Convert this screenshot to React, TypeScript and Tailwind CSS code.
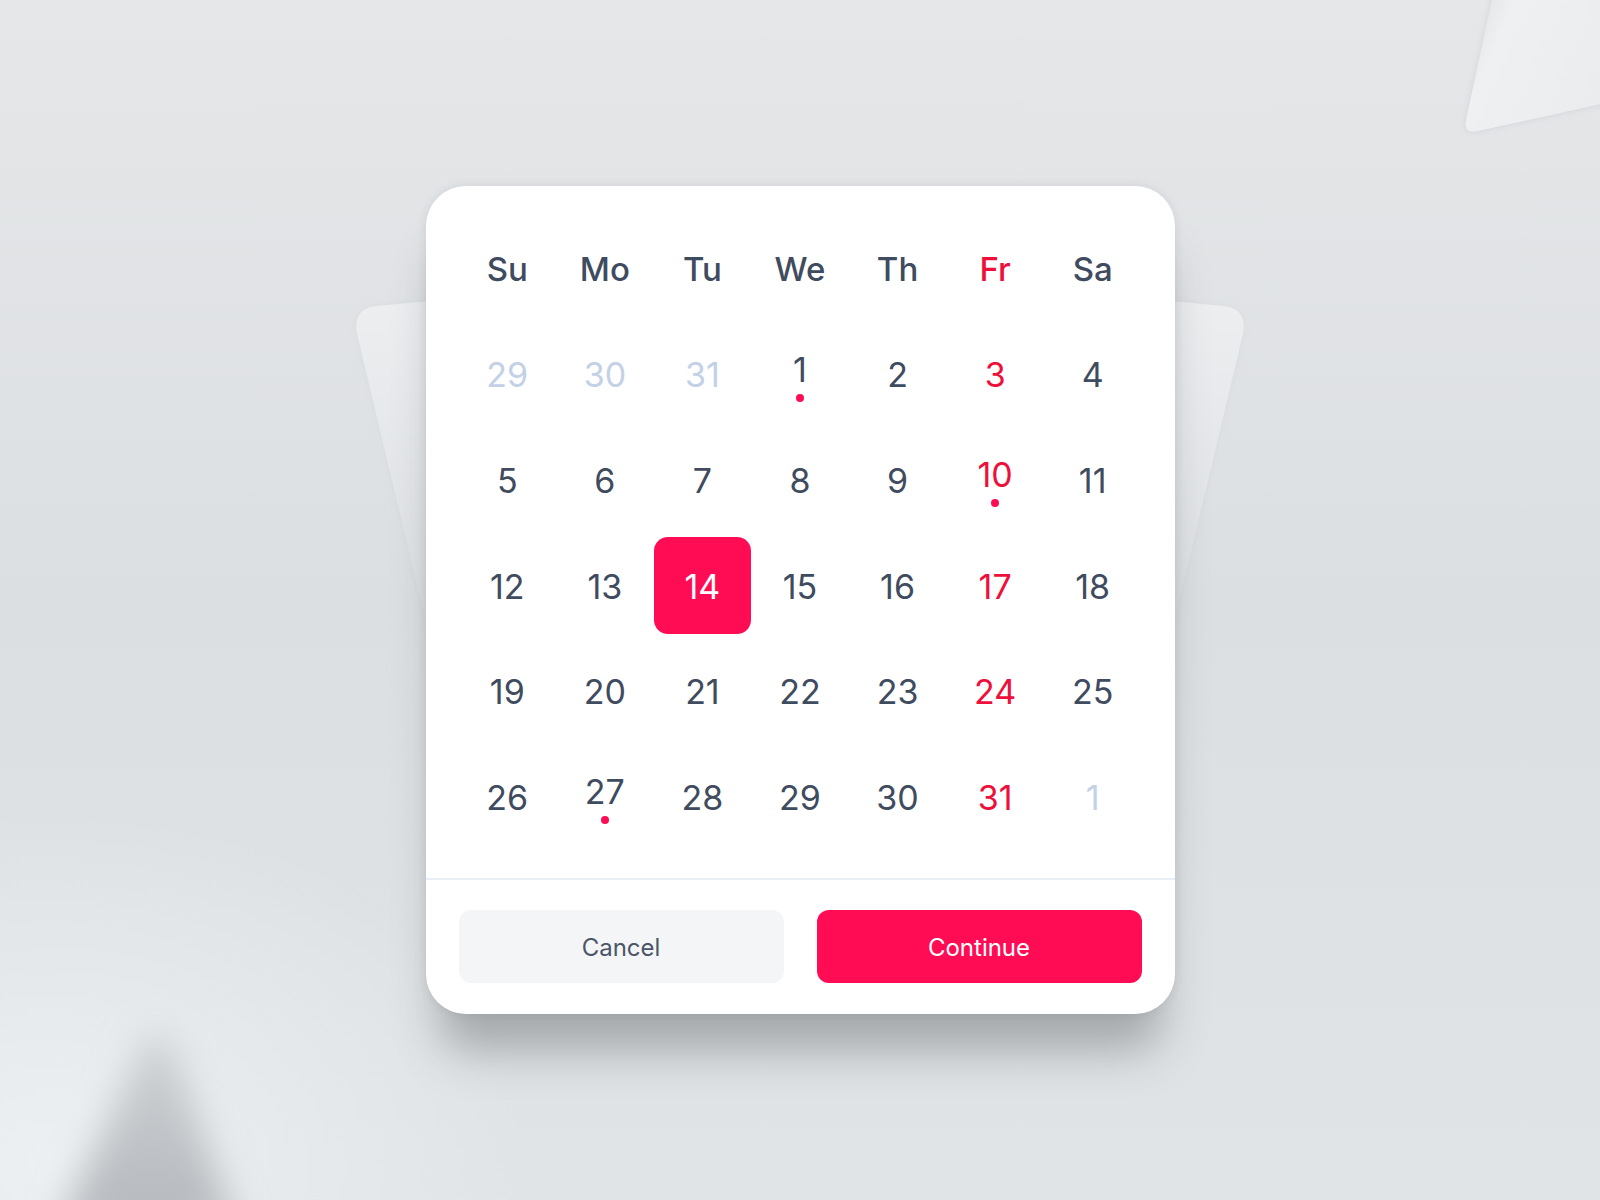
import React from 'react';

type Day = {
    n: number;
    muted?: boolean;
    dot?: boolean;
};

const weekDays = ['Su', 'Mo', 'Tu', 'We', 'Th', 'Fr', 'Sa'];

const weeks: Day[][] = [
    [{ n: 29, muted: true }, { n: 30, muted: true }, { n: 31, muted: true }, { n: 1, dot: true }, { n: 2 }, { n: 3 }, { n: 4 }],
    [{ n: 5 }, { n: 6 }, { n: 7 }, { n: 8 }, { n: 9 }, { n: 10, dot: true }, { n: 11 }],
    [{ n: 12 }, { n: 13 }, { n: 14 }, { n: 15 }, { n: 16 }, { n: 17 }, { n: 18 }],
    [{ n: 19 }, { n: 20 }, { n: 21 }, { n: 22 }, { n: 23 }, { n: 24 }, { n: 25 }],
    [{ n: 26 }, { n: 27, dot: true }, { n: 28 }, { n: 29 }, { n: 30 }, { n: 31 }, { n: 1, muted: true }],
];

const SELECTED = 14;

function Backdrop() {
    return (
        <svg className="absolute inset-0 pointer-events-none" width="1600" height="1200" viewBox="0 0 1600 1200">
            <defs>
                <linearGradient id="panel" x1="0" y1="0" x2="0" y2="1">
                    <stop offset="0" stopColor="#eceef0" />
                    <stop offset="1" stopColor="#dcdfe2" />
                </linearGradient>
                <linearGradient id="corner" x1="0" y1="0" x2="1" y2="0.4">
                    <stop offset="0" stopColor="#d9dcdf" />
                    <stop offset="0.3" stopColor="#eff0f1" />
                    <stop offset="1" stopColor="#eaecee" />
                </linearGradient>
                <linearGradient id="spike" x1="0" y1="0" x2="0" y2="1">
                    <stop offset="0" stopColor="#ced1d4" />
                    <stop offset="1" stopColor="#b4b8bc" />
                </linearGradient>
                <radialGradient id="glow" cx="0.03" cy="0.97" r="0.3">
                    <stop offset="0" stopColor="#edf0f2" />
                    <stop offset="1" stopColor="#edf0f2" stopOpacity="0" />
                </radialGradient>
                <filter id="soft" x="-80%" y="-80%" width="260%" height="260%">
                    <feGaussianBlur stdDeviation="18" />
                </filter>
                <filter id="edge" x="-20%" y="-20%" width="140%" height="140%">
                    <feGaussianBlur stdDeviation="3" />
                </filter>
            </defs>

            <rect x="0" y="0" width="1600" height="1200" fill="url(#glow)" />

            {/* stacked sheets peeking out behind the card */}
            <path d="M440 300 L376 306 Q352 309 357 334 L430 640 Z" fill="#d3d6d9" filter="url(#edge)" opacity="0.6" />
            <path d="M440 300 L376 306 Q352 309 357 334 L430 640 Z" fill="url(#panel)" />
            <path d="M1160 300 L1224 306 Q1248 309 1243 334 L1170 640 Z" fill="#d3d6d9" filter="url(#edge)" opacity="0.6" />
            <path d="M1160 300 L1224 306 Q1248 309 1243 334 L1170 640 Z" fill="url(#panel)" />

            {/* folded corner, top right */}
            <path d="M1494 -10 L1620 -10 L1620 100 L1478 131 Q1463 134 1466 120 Z" fill="#c9ccd0" filter="url(#edge)" opacity="0.7" />
            <path d="M1494 -10 L1620 -10 L1620 100 L1478 131 Q1463 134 1466 120 Z" fill="url(#corner)" />

            {/* blurred spike, bottom left */}
            <path d="M148 1036 Q160 1026 174 1050 L236 1230 L58 1230 Z" fill="url(#spike)" filter="url(#soft)" />
        </svg>
    );
}

function DayCell({ day, col }: { day: Day; col: number }) {
    const selected = !day.muted && day.n === SELECTED;
    const color = day.muted
        ? 'text-[#c3d1e6]'
        : selected
          ? 'text-white'
          : col === 5
            ? 'text-[#ee0f3a]'
            : 'text-[#3f4b5e]';

    return (
        <div className="relative flex items-center justify-center h-[97.6px]">
            <div
                className={
                    selected
                        ? 'w-[97px] h-[97.6px] rounded-[14px] bg-[#ff0c55] flex items-center justify-center'
                        : 'flex items-center justify-center'
                }
            >
                <span className={`text-[34px] leading-none ${color} ${day.dot ? 'mb-[9px]' : 'mt-[2px]'}`}>{day.n}</span>
            </div>
            {day.dot && (
                <span className="absolute left-1/2 top-[68px] -translate-x-1/2 w-2 h-2 rounded-full bg-[#ff0c55]" />
            )}
        </div>
    );
}

export default function App() {
    return (
        <div
            className="relative w-[1600px] h-[1200px] overflow-hidden bg-gradient-to-b from-[#e5e7e9] via-[#dcdfe1] to-[#e1e4e6] flex items-center justify-center"
            style={{ fontFamily: 'Inter, "Noto Sans", sans-serif' }}
        >
            <Backdrop />

            <div className="relative z-10 w-[749px] h-[828px] rounded-[40px] bg-white flex flex-col shadow-[0_0_10px_rgba(80,86,94,0.12),0_50px_46px_-14px_rgba(70,74,80,0.38)]">
                <div className="px-[33px] pt-[34px] pb-[32px]">
                    <div className="grid grid-cols-7 gap-y-[8px]">
                        {weekDays.map((d, i) => (
                            <div key={d} className="flex items-center justify-center h-[97.6px]">
                                <span
                                    className={`mt-[2px] text-[33px] leading-none font-medium ${
                                        i === 5 ? 'text-[#ee0f3a]' : 'text-[#3f4b5e]'
                                    }`}
                                >
                                    {d}
                                </span>
                            </div>
                        ))}
                        {weeks.map((week, w) =>
                            week.map((day, i) => <DayCell key={`${w}-${i}`} day={day} col={i} />)
                        )}
                    </div>
                </div>

                <div className="border-t-2 border-[#e9eff7] px-[33px] pt-[30px] pb-[31px] flex gap-[33px]">
                    <button className="flex-1 h-[73px] pt-[3px] rounded-[12px] bg-[#f4f5f7] text-[24px] text-[#4b5567]">
                        Cancel
                    </button>
                    <button className="flex-1 h-[73px] pt-[3px] rounded-[12px] bg-[#ff0c55] text-[24px] text-white">
                        Continue
                    </button>
                </div>
            </div>
        </div>
    );
}
